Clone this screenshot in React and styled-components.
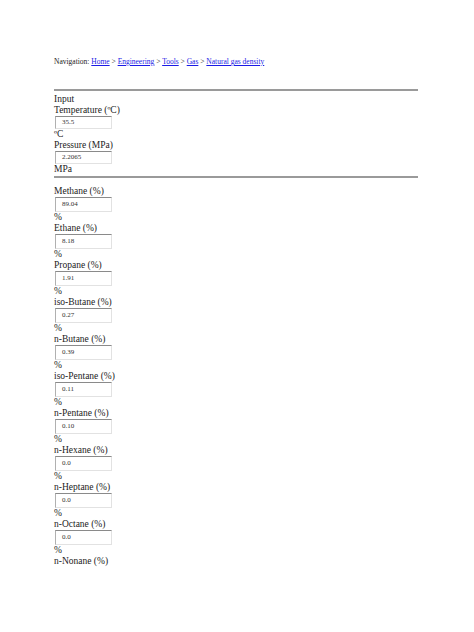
import React from 'react';
import styled, { createGlobalStyle } from 'styled-components';

const GlobalStyle = createGlobalStyle`
  body {
    margin: 0;
    background: #ffffff;
    font-family: "Liberation Serif", "Times New Roman", serif;
    color: #222222;
  }
`;

const Page = styled.div`
  width: 474px;
  height: 632px;
  overflow: hidden;
  padding: 57px 0 0 54px;
  box-sizing: border-box;
`;

const Nav = styled.div`
  font-size: 7.5px;
  line-height: 9px;
  color: #222222;
  margin-bottom: 23px;

  a {
    color: #1a1ae6;
    text-decoration: underline;
  }
`;

const Section = styled.div`
  width: 364px;
  border-top: ${(p) => (p.$ruled ? '2px solid #9a9a9a' : 'none')};
  padding-top: ${(p) => (p.$ruled ? 3 : 0)}px;
  font-size: 9.5px;
  line-height: 11px;
`;

const Rule = styled.div`
  width: 364px;
  height: 2px;
  background: #9a9a9a;
  margin-top: 1px;
  margin-bottom: 7px;
`;

const Label = styled.div`
  height: ${(p) => p.$h || 11}px;
  line-height: ${(p) => p.$h || 11}px;
  white-space: nowrap;
`;

const Box = styled.div`
  width: 57px;
  height: ${(p) => (p.$tall ? 15 : 13)}px;
  box-sizing: border-box;
  border-top: 1px solid #8a8a8a;
  border-left: 1px solid #b0b0b0;
  border-right: 1px solid #e2e2e2;
  border-bottom: 1px solid #e2e2e2;
  font-size: 7px;
  line-height: ${(p) => (p.$tall ? 13 : 11)}px;
  padding-left: 6px;
  margin-left: 1px;
  color: #333333;
`;

const top = [
  { label: 'Temperature (ºC)', value: '35.5', unit: 'ºC' },
  { label: 'Pressure (MPa)', value: '2.2065', unit: 'MPa' },
];

const gases = [
  ['Methane (%)', '89.04'],
  ['Ethane (%)', '8.18'],
  ['Propane (%)', '1.91'],
  ['iso-Butane (%)', '0.27'],
  ['n-Butane (%)', '0.39'],
  ['iso-Pentane (%)', '0.11'],
  ['n-Pentane (%)', '0.10'],
  ['n-Hexane (%)', '0.0'],
  ['n-Heptane (%)', '0.0'],
  ['n-Octane (%)', '0.0'],
];

const App = () => (
  <>
    <GlobalStyle />
    <Page>
      <Nav>
        Navigation: <a href="#">Home</a> &gt; <a href="#">Engineering</a> &gt;{' '}
        <a href="#">Tools</a> &gt; <a href="#">Gas</a> &gt;{' '}
        <a href="#">Natural gas density</a>
      </Nav>
      <Section $ruled>
        <Label>Input</Label>
        {top.map((f) => (
          <div key={f.label}>
            <Label>{f.label}</Label>
            <Box>{f.value}</Box>
            <Label>{f.unit}</Label>
          </div>
        ))}
      </Section>
      <Rule />
      <Section>
        {gases.map(([label, value]) => (
          <div key={label}>
            <Label $h={12}>{label}</Label>
            <Box $tall>{value}</Box>
            <Label $h={10}>%</Label>
          </div>
        ))}
        <Label $h={12}>n-Nonane (%)</Label>
      </Section>
    </Page>
  </>
);

export default App;
